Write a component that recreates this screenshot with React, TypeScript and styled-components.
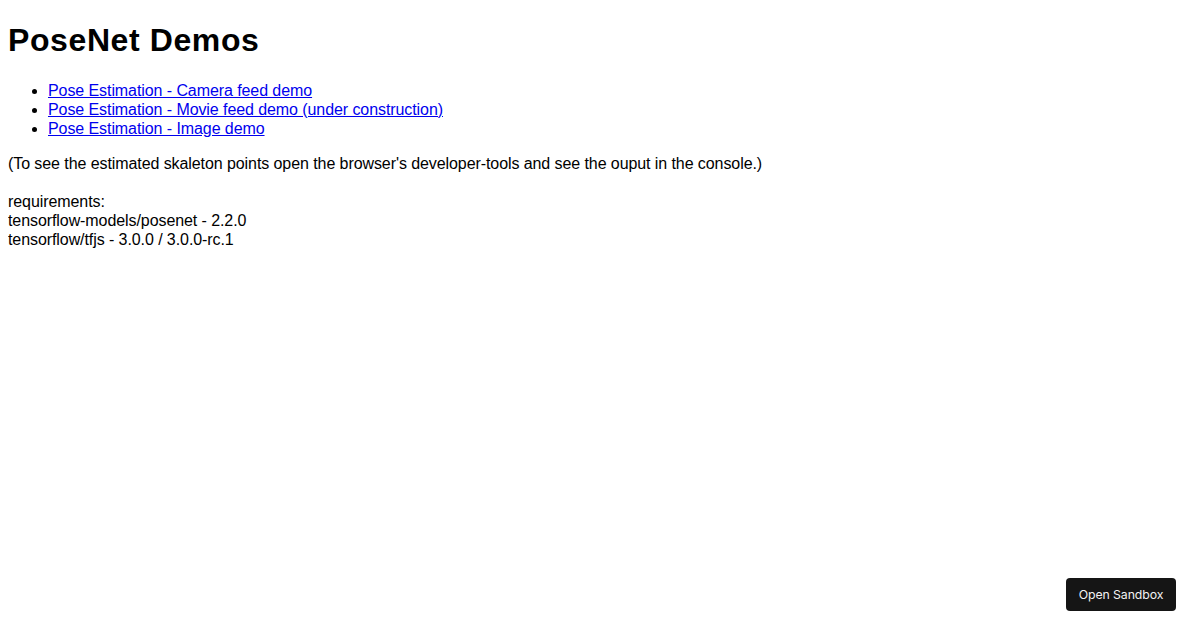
import styled, { createGlobalStyle } from 'styled-components';

const GlobalStyle = createGlobalStyle`
  body {
    margin: 8px;
    font-family: "Liberation Sans", Arial, sans-serif;
    font-size: 16px;
    line-height: 19px;
    letter-spacing: -0.08px;
    color: #000;
    background: #fff;
  }
`;

const Title = styled.h1`
  font-size: 32px;
  line-height: 37px;
  letter-spacing: 0.6px;
  font-weight: bold;
  margin: 14px 0 21.5px;
`;

const DemoList = styled.ul`
  margin: 16px 0;
  padding-left: 40px;
`;

const DemoLink = styled.a`
  color: #0000ee;
  text-decoration: underline;
`;

const Notes = styled.p`
  margin: 16px 0;
`;

const SandboxButton = styled.button`
  position: fixed;
  right: 24px;
  bottom: 19px;
  width: 110px;
  height: 33px;
  border: none;
  border-radius: 4px;
  background: #151515;
  color: #f2f2f2;
  font-family: Inter, "Liberation Sans", sans-serif;
  font-size: 12.3px;
  letter-spacing: -0.1px;
  cursor: pointer;
`;

const demos = [
  'Pose Estimation - Camera feed demo',
  'Pose Estimation - Movie feed demo (under construction)',
  'Pose Estimation - Image demo',
];

export default function App() {
  return (
    <>
      <GlobalStyle />
      <Title>PoseNet Demos</Title>
      <DemoList>
        {demos.map((d) => (
          <li key={d}>
            <DemoLink href="#">{d}</DemoLink>
          </li>
        ))}
      </DemoList>
      <Notes>
        (To see the estimated skaleton points open the browser's developer-tools and see the ouput in the console.)
        <br />
        <br />
        requirements:
        <br />
        tensorflow-models/posenet - 2.2.0
        <br />
        tensorflow/tfjs - 3.0.0 / 3.0.0-rc.1
      </Notes>
      <SandboxButton>Open Sandbox</SandboxButton>
    </>
  );
}
